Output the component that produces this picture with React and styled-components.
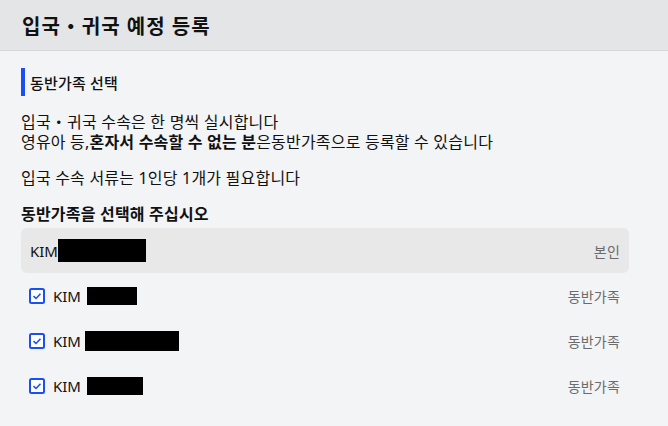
import React from "react";
import styled, { createGlobalStyle } from "styled-components";

const GlobalStyle = createGlobalStyle`
  html, body {
    margin: 0;
    padding: 0;
    background: #f3f4f6;
  }
  body {
    font-family: "Noto Sans", "Noto Sans CJK KR", sans-serif;
    color: #111;
  }
`;

const Page = styled.div`
  width: 668px;
  height: 426px;
  background: #f3f4f6;
  overflow: hidden;
`;

const Header = styled.header`
  height: 50px;
  background: #e4e5e7;
  border-bottom: 1px solid #d6d7da;
  display: flex;
  align-items: center;
  padding-left: 22px;
  box-sizing: content-box;
`;

const Title = styled.h1`
  margin: 0;
  font-size: 20px;
  font-weight: 700;
  letter-spacing: 1px;
  color: #111;
`;

const Body = styled.main`
  padding: 17px 39px 0 21px;
  display: flex;
  flex-direction: column;
`;

const SectionTitle = styled.h2`
  margin: 0;
  height: 28px;
  display: flex;
  align-items: center;
  border-left: 4px solid #1a4ff5;
  padding-left: 5px;
  font-size: 15px;
  font-weight: 500;
  letter-spacing: 0.2px;
  color: #111;
`;

const Notice = styled.p`
  margin: 16px 0 0 0;
  font-size: 16px;
  line-height: 20px;
  letter-spacing: 0.2px;
  color: #111;
`;

const Strong = styled.b`
  font-weight: 700;
`;

const Gap = styled.span`
  display: block;
  height: 16px;
`;

const Prompt = styled.div`
  margin-top: 16px;
  font-size: 16px;
  font-weight: 700;
  line-height: 20px;
  letter-spacing: 0.2px;
`;

const List = styled.ul`
  list-style: none;
  margin: 0;
  padding: 0;
  display: flex;
  flex-direction: column;
`;

const Row = styled.li`
  height: ${(p) => (p.$self ? "45px" : "45px")};
  display: flex;
  align-items: center;
  padding: ${(p) => (p.$self ? "0 9px 0 9px" : "0 9px 0 8px")};
  background: ${(p) => (p.$self ? "#e7e8e7" : "transparent")};
  border-radius: 6px;
  margin-top: ${(p) => (p.$self ? "4px" : "0")};
`;

const Check = styled.span`
  width: 16px;
  height: 16px;
  margin-right: 8px;
  display: inline-flex;
`;

const Name = styled.span`
  display: flex;
  align-items: center;
  flex: 1;
  font-size: 15px;
  color: #111;
`;

const Redact = styled.span`
  display: inline-block;
  background: #000;
  margin-left: ${(p) => p.$gap}px;
  width: ${(p) => p.$w}px;
  height: ${(p) => p.$h}px;
`;

const Role = styled.span`
  font-size: 14px;
  letter-spacing: 0.2px;
  color: #6b6b6b;
`;

function CheckIcon() {
  return (
    <Check>
      <svg width="16" height="16" viewBox="0 0 16 16">
        <rect x="1" y="1" width="14" height="14" rx="1.5" fill="#fff" stroke="#1a4ff5" strokeWidth="2" />
        <path d="M4.5 8.2 L7 10.5 L11.5 5.8" fill="none" stroke="#1a4ff5" strokeWidth="1.6" />
      </svg>
    </Check>
  );
}

const members = [
  { gap: 6, w: 50, h: 18 },
  { gap: 4, w: 94, h: 20 },
  { gap: 6, w: 56, h: 18 },
];

export default function App() {
  return (
    <Page>
      <GlobalStyle />
      <Header>
        <Title>입국・귀국 예정 등록</Title>
      </Header>
      <Body>
        <SectionTitle>동반가족 선택</SectionTitle>
        <Notice>
          입국・귀국 수속은 한 명씩 실시합니다
          <br />
          영유아 등,<Strong>혼자서 수속할 수 없는 분</Strong>은동반가족으로 등록할 수 있습니다
          <Gap />
          입국 수속 서류는 1인당 1개가 필요합니다
        </Notice>
        <Prompt>동반가족을 선택해 주십시오</Prompt>
        <List>
          <Row $self>
            <Name>
              KIM
              <Redact $gap={0} $w={88} $h={23} />
            </Name>
            <Role>본인</Role>
          </Row>
          {members.map((m, i) => (
            <Row key={i}>
              <CheckIcon />
              <Name>
                KIM
                <Redact $gap={m.gap} $w={m.w} $h={m.h} />
              </Name>
              <Role>동반가족</Role>
            </Row>
          ))}
        </List>
      </Body>
    </Page>
  );
}
